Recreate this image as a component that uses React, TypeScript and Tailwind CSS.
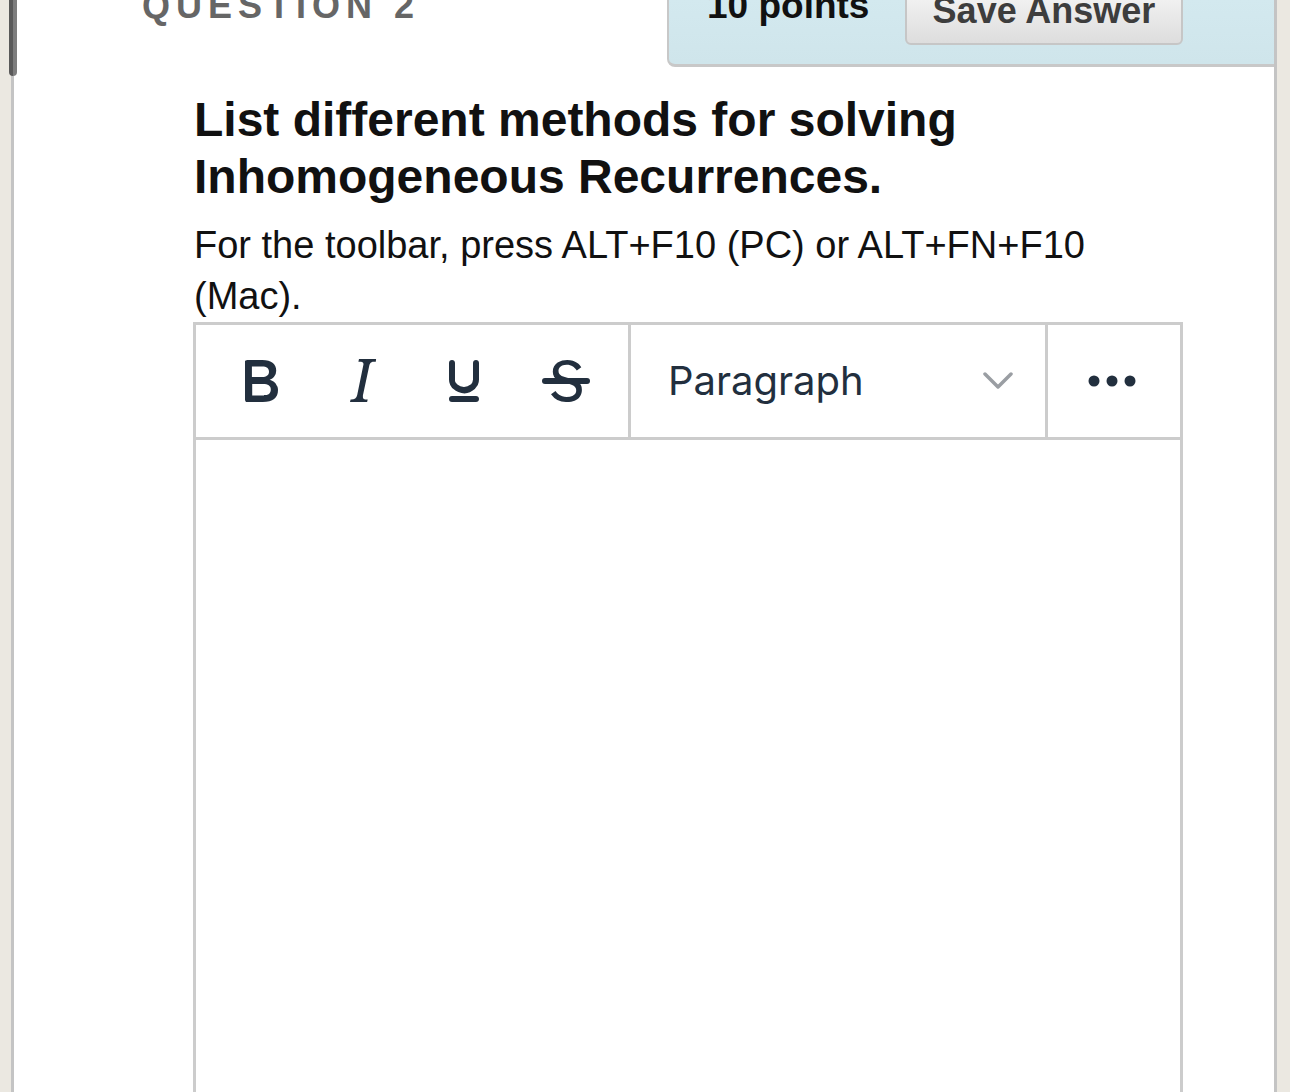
import React from "react";

const ink = "text-[#222f3e]";

function BoldIcon() {
  return (
    <svg width="72" height="72" viewBox="0 0 24 24" className="fill-[#222f3e]">
      <path
        fillRule="evenodd"
        d="M7.8 19c-.3 0-.5 0-.6-.2l-.2-.5V5.7c0-.2 0-.4.2-.5l.6-.2h5c1.5 0 2.7.3 3.5 1 .7.6 1.1 1.4 1.1 2.5a3 3 0 0 1-.6 1.9c-.4.6-1 1-1.6 1.2.4.1.9.3 1.3.6s.8.7 1 1.2c.4.4.5 1 .5 1.6 0 1.3-.4 2.3-1.3 3-.8.7-2.1 1-3.8 1H7.8zm5-8.3c.6 0 1.2-.1 1.6-.5.4-.3.6-.7.6-1.3 0-1.1-.8-1.7-2.3-1.7H9.3v3.5h3.4zm.5 6c.7 0 1.3-.1 1.7-.4.4-.4.6-.9.6-1.5s-.2-1-.7-1.4c-.4-.3-1-.4-2-.4H9.4v3.8h4z"
      />
    </svg>
  );
}

function ItalicIcon() {
  return (
    <svg width="72" height="72" viewBox="0 0 24 24" className="fill-[#222f3e]">
      <path d="M16.7 4.7l-.1.9h-.3c-.6 0-1 0-1.4.3-.3.3-.4.6-.5 1.1l-2.1 9.8v.6c0 .5.4.8 1.4.8h.2l-.2.8H8l.2-.8h.2c1.1 0 1.8-.5 2-1.5l2-9.8.1-.5c0-.6-.4-.8-1.4-.8h-.3l.2-.9h5.8z" />
    </svg>
  );
}

function UnderlineIcon() {
  return (
    <svg width="72" height="72" viewBox="0 0 24 24" className="fill-[#222f3e]">
      <path d="M16 5c.6 0 1 .4 1 1v5.5a4 4 0 0 1-.4 1.8l-1 1.4a5.3 5.3 0 0 1-5.5 1 5 5 0 0 1-1.6-1c-.5-.4-.8-.9-1.1-1.4a4 4 0 0 1-.4-1.8V6c0-.6.4-1 1-1s1 .4 1 1v5.5c0 .3 0 .6.2 1l.6.7a3.3 3.3 0 0 0 2.2.8 3.4 3.4 0 0 0 2.2-.8c.3-.2.4-.5.6-.8l.2-.9V6c0-.6.4-1 1-1zM8 17h8c.6 0 1 .4 1 1s-.4 1-1 1H8a1 1 0 0 1 0-2z" />
    </svg>
  );
}

function StrikeIcon() {
  return (
    <svg width="72" height="72" viewBox="0 0 24 24" className="fill-[#222f3e]">
      <path
        fillRule="evenodd"
        d="M15.6 8.5c-.5-.7-1-1.1-1.3-1.3-.6-.4-1.3-.6-2-.6-2.7 0-2.8 1.7-2.8 2.1 0 1.6 1.8 2 3.2 2.3 4.4.9 4.6 2.8 4.6 3.9 0 1.4-.7 4.1-5 4.1A6.2 6.2 0 0 1 7 16.4l1.5-1.1c.4.6 1.6 2 3.7 2 1.6 0 2.5-.4 3-1.2.4-.8.3-2-.8-2.6-.7-.4-1.6-.7-2.9-1-1-.2-3.9-.8-3.9-3.6C7.6 6 10.3 5 12.4 5c2.9 0 4.2 1.6 4.7 2.4l-1.5 1.1z"
      />
      <path d="M5 11h14a1 1 0 0 1 0 2H5a1 1 0 0 1 0-2z" />
    </svg>
  );
}

export default function App() {
  const buttons = [BoldIcon, ItalicIcon, UnderlineIcon, StrikeIcon];

  return (
    <div className="relative flex h-[1092px] w-[1290px] overflow-hidden bg-[#ebe8e1] font-['Liberation_Sans',Arial,sans-serif]">
      {/* scroll thumb */}
      <div className="absolute left-[9px] top-0 flex h-[76px] w-[8px] overflow-hidden rounded-b-[4px]">
        <div className="w-[4px] bg-[#595959]" />
        <div className="w-[4px] bg-[#7d7d7d]" />
      </div>

      <div className="w-[11px] shrink-0" />

      <div className="flex w-[1266px] shrink-0 flex-col border-x-[3px] border-[#c4c4c4] bg-white">
        {/* header row */}
        <div className="flex h-[67px] shrink-0 items-start">
          <div className="-mt-[12px] pl-[128px] text-[36px] font-bold leading-[36px] tracking-[6px] text-[#666666]">
            QUESTION 2
          </div>
          <div className="ml-auto flex h-[67px] w-[607px] items-start rounded-bl-[8px] border-b-[3px] border-l-[2px] border-[#c8c8c8] bg-gradient-to-b from-[#d3e9ef] to-[#cfe5eb]">
            <div className="-mt-[13px] pl-[38px] text-[37px] font-bold leading-[37px] text-[#111111]">
              10 points
            </div>
            <div className="-mt-[10px] ml-auto mr-[91px] flex h-[55px] w-[278px] items-start justify-center rounded-[6px] border-2 border-[#c6c6c6] bg-gradient-to-b from-[#f4f4f4] to-[#dddddd] pt-[1px] text-[36px] font-bold leading-[36px] text-[#3d3d3d]">
              Save Answer
            </div>
          </div>
        </div>

        {/* question */}
        <div className="pl-[180px] pr-[60px]">
          <h2 className="mt-[24px] text-[48px] font-bold leading-[57px] text-[#111111]">
            List different methods for solving
            <br />
            Inhomogeneous Recurrences.
          </h2>
          <p className="mt-[15px] text-[38px] leading-[51px] text-[#111111]">
            For the toolbar, press ALT+F10 (PC) or ALT+FN+F10
            <br />
            (Mac).
          </p>

          {/* editor */}
          <div className="-ml-[1px] flex h-[900px] w-[990px] flex-col border-[3px] border-[#cccccc]">
            <div className="flex h-[115px] shrink-0 border-b-[3px] border-[#cccccc]">
              <div className="flex w-[432px] items-center pl-[13px]">
                {buttons.map((Icon, i) => (
                  <div key={i} className="flex h-full w-[102px] items-center justify-center">
                    <Icon />
                  </div>
                ))}
              </div>
              <div className="w-[3px] bg-[#cccccc]" />
              <div className="flex w-[414px] items-center pl-[37px] pr-[32px]">
                <span className={`font-['Inter',sans-serif] text-[40px] ${ink}`}>Paragraph</span>
                <svg width="30" height="18" viewBox="0 0 30 18" className="ml-auto">
                  <polyline
                    points="2,2 15,15 28,2"
                    fill="none"
                    stroke="#9a9ea3"
                    strokeWidth="3.5"
                    strokeLinecap="round"
                    strokeLinejoin="round"
                  />
                </svg>
              </div>
              <div className="w-[3px] bg-[#cccccc]" />
              <div className="flex flex-1 items-center justify-center pr-[4px]">
                <svg width="48" height="12" viewBox="0 0 48 12">
                  <circle cx="6" cy="6" r="5.5" fill="#222f3e" />
                  <circle cx="24" cy="6" r="5.5" fill="#222f3e" />
                  <circle cx="42" cy="6" r="5.5" fill="#222f3e" />
                </svg>
              </div>
            </div>
            <div className="flex-1 bg-white" />
          </div>
        </div>
      </div>

      <div className="flex-1" />
    </div>
  );
}
